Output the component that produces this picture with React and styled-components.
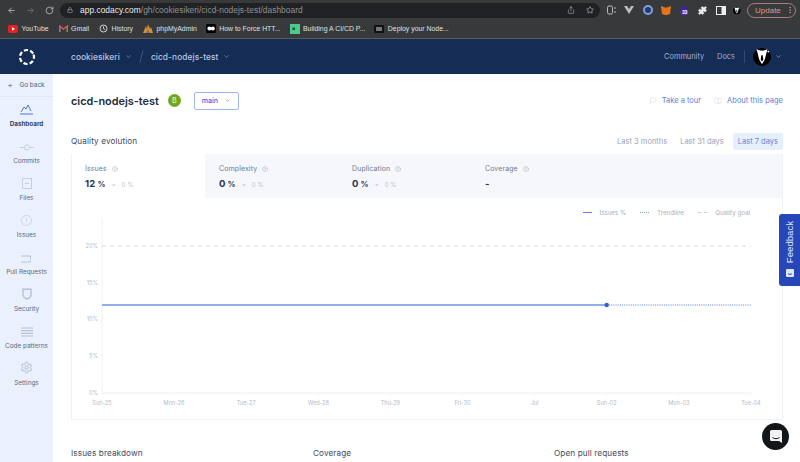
import React from "react";
import styled, { createGlobalStyle } from "styled-components";
import { ArrowLeft, ArrowRight, RotateCw, Lock, Share, Star, Puzzle, ChevronDown, Flag, BookOpen, HelpCircle, Settings as Gear, MoreVertical } from "lucide-react";

const Global = createGlobalStyle`
  html, body { margin: 0; padding: 0; background: #fff; }
  * { box-sizing: border-box; }
  body { font-family: Inter, "Noto Sans", sans-serif; }
`;
const Page = styled.div`width: 800px; height: 462px; overflow: hidden; position: relative; display: flex; flex-direction: column;`;

const AddressRow = styled.div`height: 19px; background: #38393b; display: flex; align-items: center; padding: 1px 0 0 7px; color: #c4c6c9; flex: none;`;
const NavButtons = styled.div`display: flex; gap: 10px; width: 53px; flex: none; align-items: center; svg { width: 9px; height: 9px; }`;
const Omnibox = styled.div`width: 540px; flex: none; height: 15px; border-radius: 8px; background: #202124; display: flex; align-items: center; padding: 0 6px 0 7px; font: 400 8.4px "Liberation Sans", Arial, sans-serif; letter-spacing: .03px;`;
const Host = styled.span`color: #e8eaed;`;
const UrlPath = styled.span`color: #8f9296; flex: 1;`;
const OmniIcons = styled.div`display: flex; gap: 11px; align-items: center; svg { width: 8px; height: 8px; }`;
const Extensions = styled.div`display: flex; align-items: center; margin-left: 5px; gap: 6.3px; flex: 1; min-width: 0;`;
const UpdatePill = styled.div`margin-left: auto; margin-right: 4px; width: 49px; flex: none; height: 15px; border-radius: 8px; border: 1px solid #a97f7b; color: #d79a93; font: 8px "Liberation Sans", Arial, sans-serif; display: flex; align-items: center; justify-content: space-between; padding: 0 1px 0 7px; svg { width: 8px; height: 8px; }`;
const ExtBadge = styled.span`position: absolute; left: 3px; top: 6px; background: #5b2fc0; color: #fff; font: 700 4.5px "Liberation Sans", sans-serif; border-radius: 2px; padding: 0 1px;`;
const ExtSlot = styled.div`position: relative; width: 12px; height: 12px; flex: none; display: flex; align-items: center; justify-content: center; color: #d8d8d8; svg { display: block; }`;

const BookmarksBar = styled.div`height: 19px; background: #38393b; border-bottom: 1px solid #5a5c60; display: flex; align-items: center; padding-left: 8px; flex: none; box-sizing: content-box;`;
const Bookmark = styled.div`display: flex; align-items: center; gap: 3.5px; color: #dfe1e4; font: 6.9px "Liberation Sans", Arial, sans-serif; margin-right: ${p => p.$gap}px; white-space: nowrap; svg { flex: none; }`;

const TopNav = styled.header`height: 35px; background: #152c55; display: flex; align-items: center; flex: none; color: #b8c8e4; font-size: 8px; font-weight: 500;`;
const LogoSlot = styled.div`width: 71px; padding-left: 18px; display: flex;`;
const Crumb = styled.div`display: flex; align-items: center; gap: 5px; font-size: 8.3px; letter-spacing: .1px; svg { width: 7px; height: 7px; color: #8ea2c6; }`;
const Slash = styled.div`width: 1px; height: 13px; background: #3d5580; transform: rotate(14deg); margin: 0 9px 0 9px;`;
const NavRight = styled.div`margin-left: auto; display: flex; align-items: center; font-weight: 400; font-size: 7.4px; color: #9fb2d6;`;
const NavLink = styled.span`margin-right: ${p => p.$mr}px;`;
const NavDivider = styled.div`width: 1px; height: 13px; background: #33497a; margin-right: 8px;`;
const AvatarChevron = styled.span`margin: 0 18px 0 4px; display: flex; svg { width: 7px; height: 7px; }`;

const Body = styled.div`flex: 1; display: flex; min-height: 0;`;
const Sidebar = styled.aside`width: 53px; background: #eaf1fc; flex: none; display: flex; flex-direction: column; align-items: center;`;
const GoBack = styled.div`width: 100%; height: 23px; border-bottom: 1px solid #e0e8f6; display: flex; align-items: center; justify-content: center; gap: 6px; font-size: 6.4px; color: #4f5d78;`;
const SideItems = styled.div`display: flex; flex-direction: column; width: 100%;`;
const SideItem = styled.div`height: 37px; display: flex; flex-direction: column; align-items: center; justify-content: flex-end; padding-bottom: 6px; gap: 5px; font-size: ${p => (p.$active ? 6.3 : 6.4)}px; font-weight: ${p => (p.$active ? 700 : 400)}; color: ${p => (p.$active ? "#33436a" : "#5a6882")}; white-space: nowrap;`;

const Main = styled.main`flex: 1; padding: 0 17px 0 18px; min-width: 0;`;
const TitleRow = styled.div`height: 54px; display: flex; align-items: center; padding-bottom: 1px;`;
const Title = styled.h1`margin: 0; font-size: 10.9px; font-weight: 600; color: #222c40; letter-spacing: 0;`;
const Grade = styled.div`width: 13px; height: 13px; border-radius: 50%; background: #71a81e; color: #e8f3c8; font-size: 7px; font-weight: 500; display: flex; align-items: center; justify-content: center; margin-left: 9px;`;
const BranchButton = styled.div`width: 45px; height: 18px; border: 1px solid #9db8ee; border-radius: 2px; margin-left: 13px; display: flex; align-items: center; justify-content: center; gap: 6px; color: #3b68d8; font-size: 7px; font-weight: 500; svg { width: 7px; height: 7px; color: #6f89bb; }`;
const HelpLinks = styled.div`margin-left: auto; display: flex; gap: 13px; color: #5f80d8; font-size: 7.5px;`;
const HelpLink = styled.span`display: flex; align-items: center; gap: 5px; svg { width: 8px; height: 8px; color: #c4cfe6; }`;

const SectionHead = styled.div`height: 26px; display: flex; align-items: center; justify-content: space-between;`;
const SectionTitle = styled.h2`margin: 0; font-size: 8.2px; font-weight: 400; color: #404b60; letter-spacing: .1px;`;
const Ranges = styled.div`display: flex; align-items: center; font-size: 7.5px; color: #9aa3b5; margin-top: 1px;`;
const Range = styled.span`padding: 0 5px; height: 17px; display: flex; align-items: center; margin-left: ${p => p.$ml || 0}px; border-radius: 2px; ${p => p.$active && "background: #e6effc; color: #6285d8;"}`;

const Card = styled.section`width: 712px; height: 266px; border: 1px solid #f0f2f6; border-top: 0; margin-top: 0;`;
const Tabs = styled.div`height: 44px; display: flex; background: #f5f7fb;`;
const Tab = styled.div`width: 133px; background: ${p => (p.$active ? "#fff" : "transparent")}; padding: 10px 0 0 ${p => (p.$active ? 13 : 14)}px;`;
const TabLabel = styled.div`display: flex; align-items: center; gap: 5px; font-size: 7px; color: #6f7a90; letter-spacing: .1px; svg { width: 6px; height: 6px; color: #a9b3c4; }`;
const TabValue = styled.div`display: flex; align-items: baseline; margin-top: 5px; color: #2a3550; font-size: 9.5px; font-weight: 700; letter-spacing: .2px;`;
const Pct = styled.span`font-size: 8px; font-weight: 600; margin-left: 2px;`;
const Delta = styled.span`font-size: 6px; font-weight: 400; color: #bcc2ce; margin-left: 6px; white-space: pre;`;
const Legend = styled.div`height: 0; display: flex; justify-content: flex-end; align-items: flex-start; gap: 14px; padding-right: 32px; font-size: 6.2px; color: #a7afc0;`;
const LegendItem = styled.div`display: flex; align-items: center; gap: 8px; height: 28px;`;
const Swatch = styled.i`width: 9px; height: 0; border-top: 1px ${p => p.$style} ${p => p.$color}; display: block;`;
const ChartSvg = styled.svg`display: block; width: 710px; height: 222px; text { font-family: Inter, sans-serif; font-size: 5.6px; fill: #b3bac8; }`;

const Lower = styled.div`display: flex; margin-top: 28px;`;
const LowerTitle = styled.h2`margin: 0; width: ${p => p.$w}px; font-size: 8.2px; font-weight: 400; color: #404b60; letter-spacing: .1px;`;

const Feedback = styled.div`position: absolute; right: 0; top: 214px; width: 21px; height: 72px; background: #2747b8; border-radius: 3px 0 0 3px; display: flex; flex-direction: column; align-items: center; justify-content: flex-end; gap: 6px; padding-bottom: 9px; color: #dfe6f8;`;
const FeedbackText = styled.span`writing-mode: vertical-rl; transform: rotate(180deg); font: 9.6px "Liberation Sans", Arial, sans-serif;`;
const ChatBubble = styled.div`position: absolute; left: 762px; top: 423px; width: 27px; height: 27px; border-radius: 50%; background: #14171a; display: flex; align-items: center; justify-content: center;`;

const Tuxedo = ({ size }) => (
  <svg width={size} height={size} viewBox="0 0 20 20">
    <circle cx="10" cy="10" r="10" fill="#000" />
    <path d="M4 1.5 7 2.5 10 3l3-.5 3-1L13 13l-3 5-3-5z" fill="#fff" />
    <path d="M9.2 8h1.6l.6 5-1.4 2-1.4-2z" fill="#000" />
    <circle cx="17" cy="4" r="1" fill="#fff" />
  </svg>
);
const Logo = () => (
  <svg width="18" height="18" viewBox="0 0 18 18" fill="none" stroke="#fff" strokeWidth="2.2">
    <circle cx="9" cy="9" r="7" strokeDasharray="4.2 2.2" transform="rotate(-20 9 9)" />
  </svg>
);
const sideIcons = {
  Dashboard: <svg width="13" height="11" viewBox="0 0 13 11" fill="none" stroke="#4f78d8" strokeWidth="1"><path d="M1 8 4 3l2 2 2-4 3 6" /><path d="M0 10h13" /></svg>,
  Commits: <svg width="14" height="9" viewBox="0 0 14 9" fill="none" stroke="#c5cfe1" strokeWidth="1"><circle cx="7" cy="4.5" r="2.6" /><path d="M0 4.5h4.4M9.6 4.5H14" /></svg>,
  Files: <svg width="10" height="11" viewBox="0 0 10 11" fill="none" stroke="#c5cfe1" strokeWidth="1"><rect x=".5" y=".5" width="9" height="10" /><path d="M3 5.5h4" /></svg>,
  Issues: <svg width="11" height="11" viewBox="0 0 11 11" fill="none" stroke="#cdd6e6" strokeWidth="1"><circle cx="5.5" cy="5.5" r="5" /><path d="M5.5 3v3.4M5.5 7.5v.8" /></svg>,
  "Pull Requests": <svg width="11" height="8" viewBox="0 0 11 8" fill="none" stroke="#b6c2d8" strokeWidth="1"><path d="M0 1h9.5v3.5M0 7h9.5V5.5" /></svg>,
  Security: <svg width="10" height="12" viewBox="0 0 10 12" fill="none" stroke="#b6c2d8" strokeWidth="1.4"><path d="M1 1.2h8v5.5c0 2-2 3.4-4 4.3-2-.9-4-2.3-4-4.3z" /></svg>,
  "Code patterns": <svg width="12" height="10" viewBox="0 0 12 10" fill="none" stroke="#b6c2d8" strokeWidth="1.2"><path d="M0 1h12M0 3.7h12M0 6.3h12M0 9h12" /></svg>,
  Settings: <Gear size={13} color="#bdc8dc" strokeWidth={2} />,
};
const sideItems = ["Dashboard", "Commits", "Files", "Issues", "Pull Requests", "Security", "Code patterns", "Settings"];
const bookmarks = [
  ["YouTube", <svg width="10" height="8" viewBox="0 0 10 8"><rect width="10" height="8" rx="2" fill="#e52222" /><path d="M4 2.3 7 4 4 5.7z" fill="#fff" /></svg>, 10],
  ["Gmail", <svg width="9" height="7" viewBox="0 0 9 7" fill="none" strokeWidth="1.4"><path d="M.7 7V1l3.8 3L8.3 1v6" stroke="#e5533f" /><path d="M.7 7V2" stroke="#4a86e8" /><path d="M8.3 7V2" stroke="#3bab5a" /></svg>, 10],
  ["History", <svg width="9" height="9" viewBox="0 0 9 9" fill="none" stroke="#dfe1e4" strokeWidth=".9"><circle cx="4.5" cy="4.5" r="3.5" /><path d="M4.5 2.5v2.2L6 5.5" /></svg>, 10],
  ["phpMyAdmin", <svg width="10" height="9" viewBox="0 0 10 9"><path d="M0 9 3 2l1 3 1-5 2 5 1-2 2 6z" fill="#d9932a" /><path d="M3 9l2-4 2 4z" fill="#7b6a9e" /></svg>, 9],
  ["How to Force HTT...", <svg width="10" height="9" viewBox="0 0 10 9"><rect width="10" height="9" rx="1.5" fill="#000" /><circle cx="3.4" cy="4.5" r="2" fill="#fff" /><circle cx="6.8" cy="4.5" r="2" fill="#fff" /></svg>, 9],
  ["Building A CI/CD P...", <svg width="10" height="10" viewBox="0 0 10 10"><rect width="10" height="10" fill="#4fc98a" /><rect x="2.5" y="3.5" width="2.5" height="2.5" fill="#14524a" /></svg>, 9],
  ["Deploy your Node...", <svg width="10" height="8" viewBox="0 0 10 8"><rect width="10" height="8" rx="1" fill="#111" /><path d="M2 3h6M2 5h6" stroke="#ddd" strokeWidth="1" /></svg>, 0],
];
const xLabels = ["Sun-25", "Mon-26", "Tue-27", "Wed-28", "Thu-29", "Fri-30", "Jul", "Sun-02", "Mon-03", "Tue-04"];
const yLabels = [["20%", 48], ["15%", 85], ["10%", 121], ["5%", 158], ["0%", 195]];
const metrics = [
  { name: "Issues", value: "12", active: true },
  { name: "Complexity", value: "0" },
  { name: "Duplication", value: "0" },
  { name: "Coverage" },
];
const x0 = 30, step = 72.1;

export default function App() {
  return (
    <Page>
      <Global />
      <AddressRow>
        <NavButtons>
          <ArrowLeft strokeWidth={2} />
          <ArrowRight strokeWidth={2} color="#777" />
          <RotateCw strokeWidth={2} />
        </NavButtons>
        <Omnibox>
          <Lock size={6} color="#b5b7ba" style={{ marginRight: 7 }} />
          <Host>app.codacy.com</Host>
          <UrlPath>/gh/cookiesikeri/cicd-nodejs-test/dashboard</UrlPath>
          <OmniIcons><Share strokeWidth={1.6} /><Star strokeWidth={1.8} /></OmniIcons>
        </Omnibox>
        <Extensions>
          <ExtSlot><svg width="9" height="10" viewBox="0 0 9 10" fill="none" stroke="#bbb" strokeWidth="1"><rect x=".5" y="1" width="5" height="8" rx="1.5" /><path d="M8 2v2M8 6v2" /></svg></ExtSlot>
          <ExtSlot><svg width="10" height="8" viewBox="0 0 10 8"><path d="M0 0h10L5 8z" fill="#b9bdc4" /><path d="M3 0h4L5 3z" fill="#38393b" /></svg></ExtSlot>
          <ExtSlot><svg width="10" height="10" viewBox="0 0 10 10"><circle cx="5" cy="5" r="5" fill="#7f9fe0" /><circle cx="5" cy="5" r="3" fill="#223a70" /></svg></ExtSlot>
          <ExtSlot><svg width="10" height="9" viewBox="0 0 10 9"><path d="M0 0l4 1.5h2L10 0 9 8 6 9H4L1 8z" fill="#e2761b" /></svg></ExtSlot>
          <ExtSlot><svg width="9" height="8" viewBox="0 0 9 8"><circle cx="4" cy="4" r="4" fill="#3b2a8f" /></svg><ExtBadge>33</ExtBadge></ExtSlot>
          <ExtSlot><Puzzle size={9} fill="#eee" color="#eee" /></ExtSlot>
          <ExtSlot><svg width="10" height="9" viewBox="0 0 10 9" fill="none"><rect x=".5" y=".5" width="9" height="8" stroke="#eee" /><rect x="5.5" y="1" width="4" height="7" fill="#eee" /></svg></ExtSlot>
          <Tuxedo size={13} />
          <UpdatePill>Update<MoreVertical /></UpdatePill>
        </Extensions>
      </AddressRow>
      <BookmarksBar>
        {bookmarks.map(([label, icon, gap]) => (
          <Bookmark key={label} $gap={gap}>{icon}{label}</Bookmark>
        ))}
      </BookmarksBar>
      <TopNav>
        <LogoSlot><Logo /></LogoSlot>
        <Crumb>cookiesikeri<ChevronDown /></Crumb>
        <Slash />
        <Crumb>cicd-nodejs-test<ChevronDown /></Crumb>
        <NavRight>
          <NavLink $mr={13}>Community</NavLink>
          <NavLink $mr={9}>Docs</NavLink>
          <NavDivider />
          <Tuxedo size={18} />
          <AvatarChevron><ChevronDown /></AvatarChevron>
        </NavRight>
      </TopNav>
      <Body>
        <Sidebar>
          <GoBack><ArrowLeft size={5} strokeWidth={3} />Go back</GoBack>
          <SideItems>
            {sideItems.map((name, i) => (
              <SideItem key={name} $active={i === 0}>{sideIcons[name]}{name}</SideItem>
            ))}
          </SideItems>
        </Sidebar>
        <Main>
          <TitleRow>
            <Title>cicd-nodejs-test</Title>
            <Grade>B</Grade>
            <BranchButton>main<ChevronDown /></BranchButton>
            <HelpLinks>
              <HelpLink><Flag strokeWidth={1.2} />Take a tour</HelpLink>
              <HelpLink><BookOpen strokeWidth={1.2} />About this page</HelpLink>
            </HelpLinks>
          </TitleRow>
          <SectionHead>
            <SectionTitle>Quality evolution</SectionTitle>
            <Ranges>
              <Range>Last 3 months</Range>
              <Range $ml={3}>Last 31 days</Range>
              <Range $ml={4} $active>Last 7 days</Range>
            </Ranges>
          </SectionHead>
          <Card>
            <Tabs>
              {metrics.map(m => (
                <Tab key={m.name} $active={m.active}>
                  <TabLabel>{m.name}<HelpCircle /></TabLabel>
                  {m.value ? (
                    <TabValue>{m.value}<Pct>%</Pct><Delta>{"=   0 %"}</Delta></TabValue>
                  ) : (
                    <TabValue>-</TabValue>
                  )}
                </Tab>
              ))}
            </Tabs>
            <Legend>
              <LegendItem><Swatch $style="solid" $color="#5f86e0" />Issues %</LegendItem>
              <LegendItem><Swatch $style="dotted" $color="#8a9ccc" />Trendline</LegendItem>
              <LegendItem><Swatch $style="dashed" $color="#ccd2dc" />Quality goal</LegendItem>
            </Legend>
            <ChartSvg viewBox="0 0 710 222">
              <path d={`M${x0} 20V195H679`} fill="none" stroke="#eef1f6" strokeWidth="1" />
              {xLabels.map((l, i) => (
                <g key={l}>
                  <path d={`M${x0 + i * step} 195v2`} stroke="#eef1f6" />
                  <text x={x0 + i * step} y="207" textAnchor="middle">{l}</text>
                </g>
              ))}
              {yLabels.map(([l, y]) => <text key={l} x="26" y={y + 2} textAnchor="end">{l}</text>)}
              <path d={`M${x0} 48H679`} stroke="#d6d9df" strokeDasharray="4 4" />
              <path d={`M${x0} 107H${x0 + 7 * step}`} stroke="#6f95e8" strokeWidth="1.5" />
              <path d={`M${x0 + 7 * step} 107H679`} stroke="#4f7ee0" strokeWidth="1" strokeDasharray="1 1.2" />
              <circle cx={x0 + 7 * step} cy="107" r="2.2" fill="#2f5fd8" />
            </ChartSvg>
          </Card>
          <Lower>
            <LowerTitle $w={242}>Issues breakdown</LowerTitle>
            <LowerTitle $w={241}>Coverage</LowerTitle>
            <LowerTitle $w={200}>Open pull requests</LowerTitle>
          </Lower>
        </Main>
      </Body>
      <Feedback>
        <FeedbackText>Feedback</FeedbackText>
        <svg width="8" height="8" viewBox="0 0 8 8"><rect width="8" height="8" rx="1" fill="#dfe6f8" /><path d="M2 4.5c1 1.2 3 1.2 4 0" stroke="#2747b8" fill="none" /></svg>
      </Feedback>
      <ChatBubble>
        <svg width="12" height="13" viewBox="0 0 12 13"><path d="M1.5 0h9A1.5 1.5 0 0 1 12 1.5V13l-3-2H1.5A1.5 1.5 0 0 1 0 9.5v-8A1.5 1.5 0 0 1 1.5 0z" fill="#f2f2f2" /><path d="M2.5 7.5c2 1.6 5 1.6 7 0" stroke="#14171a" fill="none" /></svg>
      </ChatBubble>
    </Page>
  );
}
